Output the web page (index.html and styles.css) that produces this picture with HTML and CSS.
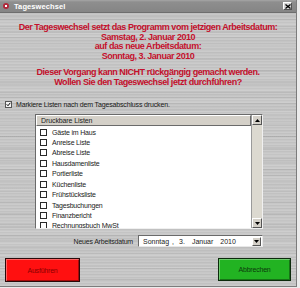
FILE: index.html
```html
<!DOCTYPE html>
<html lang="de">
<head>
<meta charset="utf-8">
<title>Tageswechsel</title>
<link rel="stylesheet" href="styles.css">
</head>
<body>
<div class="window">
  <div class="titlebar">
    <span class="app-icon"></span>
    <span class="title">Tageswechsel</span>
    <span class="close"><svg width="6" height="5" viewBox="0 0 6 5"><path d="M0.5 0.5 L5.5 4.5 M5.5 0.5 L0.5 4.5" stroke="#000" stroke-width="1.3"/></svg></span>
  </div>
  <div class="content">
    <div class="message">
      <p>Der Tageswechsel setzt das Programm vom jetzigen Arbeitsdatum:<br>Samstag, 2. Januar 2010<br>auf das neue Arbeitsdatum:<br>Sonntag, 3. Januar 2010</p>
      <p>Dieser Vorgang kann NICHT rückgängig gemacht werden.<br>Wollen Sie den Tageswechsel jetzt durchführen?</p>
    </div>
    <div class="print-check">
      <span class="cb cb-checked"><svg width="7" height="7" viewBox="0 0 7 7"><path d="M1 3.2 L2.8 5.2 L6 1.2" fill="none" stroke="#000" stroke-width="1.4"/></svg></span>
      <span class="print-label">Markiere Listen nach dem Tagesabschluss drucken.</span>
    </div>
    <div class="listbox">
      <div class="list-main">
        <div class="list-header">Druckbare Listen</div>
        <ul class="list-items">
          <li><span class="cb"></span>Gäste im Haus</li>
          <li><span class="cb"></span>Anreise Liste</li>
          <li><span class="cb"></span>Abreise Liste</li>
          <li><span class="cb"></span>Hausdamenliste</li>
          <li><span class="cb"></span>Portierliste</li>
          <li><span class="cb"></span>Küchenliste</li>
          <li><span class="cb"></span>Frühstücksliste</li>
          <li><span class="cb"></span>Tagesbuchungen</li>
          <li><span class="cb"></span>Finanzbericht</li>
          <li><span class="cb"></span>Rechnungsbuch MwSt</li>
        </ul>
      </div>
      <div class="scrollbar">
        <span class="sb-btn"><svg width="5" height="3" viewBox="0 0 5 3"><path d="M0 3 L2.5 0 L5 3 Z" fill="#000"/></svg></span>
        <span class="sb-track"></span>
        <span class="sb-btn"><svg width="5" height="3" viewBox="0 0 5 3"><path d="M0 0 L2.5 3 L5 0 Z" fill="#000"/></svg></span>
      </div>
    </div>
    <div class="date-row">
      <span class="date-label">Neues Arbeitsdatum</span>
      <div class="combo">
        <span class="seg seg-day">Sonntag</span>
        <span class="seg seg-comma">,</span>
        <span class="seg seg-num">3.</span>
        <span class="seg seg-month">Januar</span>
        <span class="seg seg-year">2010</span>
        <span class="combo-btn"><svg width="5" height="3" viewBox="0 0 5 3"><path d="M0 0 L2.5 3 L5 0 Z" fill="#000"/></svg></span>
      </div>
    </div>
    <div class="buttons">
      <button class="btn btn-run">Ausführen</button>
      <button class="btn btn-cancel">Abbrechen</button>
    </div>
  </div>
</div>
</body>
</html>
```
FILE: styles.css
```css
* { box-sizing: border-box; }
html, body { margin: 0; padding: 0; }
body {
  width: 300px;
  height: 288px;
  overflow: hidden;
  background: #ececec;
  font-family: "Liberation Sans", Arial, sans-serif;
}
.window {
  width: 297px;
  height: 287px;
  border-right: 1px solid #7c7c7c;
  border-bottom: 1px solid #7c7c7c;
  background-color: #c4c4c4;
  background-image:
    repeating-linear-gradient(180deg, rgba(255,255,255,0.08) 0 1px, rgba(0,0,0,0.03) 1px 2px, transparent 2px 3px),
    repeating-linear-gradient(180deg, rgba(255,255,255,0.06) 0 4px, rgba(0,0,0,0.05) 4px 5px, transparent 5px 11px),
    repeating-linear-gradient(180deg, transparent 0 6px, rgba(0,0,0,0.04) 6px 7px, rgba(255,255,255,0.05) 7px 13px);
  display: flex;
  flex-direction: column;
}
.titlebar {
  height: 13px;
  flex: none;
  display: flex;
  align-items: center;
  padding: 0 2px 0 3px;
  background: linear-gradient(180deg, #a6a6a6 0, #8e8e8e 2px, #858585 100%);
  border-bottom: 1px solid #6e6e6e;
}
.app-icon {
  width: 6px;
  height: 6px;
  border-radius: 50%;
  background: radial-gradient(circle, #fff 0 1px, #b0283a 1.5px);
  flex: none;
}
.title {
  margin-left: 5px;
  color: #fff;
  font-size: 7.5px;
  font-weight: bold;
  letter-spacing: 0.1px;
}
.close {
  margin-left: auto;
  margin-right: 2px;
  width: 9px;
  height: 8px;
  background: #d6d6d6;
  border: 1px solid;
  border-color: #fff #555 #555 #fff;
  display: flex;
  align-items: center;
  justify-content: center;
}
.content {
  padding: 0 5px;
  flex: 1;
}
.message {
  margin-top: 10px;
  text-align: center;
  color: #c4102c;
  font-weight: bold;
  font-size: 9px;
  letter-spacing: -0.45px;
  line-height: 9.5px;
}
.message p { margin: 0; }
.message p + p { margin-top: 7px; }
.print-check {
  margin-top: 12px;
  height: 10px;
  display: flex;
  align-items: center;
  font-size: 7px;
  letter-spacing: -0.15px;
  color: #1a1a1a;
}
.cb {
  width: 7px;
  height: 7px;
  flex: none;
  background: #fff;
  border: 1px solid #2a2a2a;
  display: inline-flex;
  align-items: center;
  justify-content: center;
}
.cb-checked {
  background: #f4f4f4;
  border-color: #555;
}
.cb-checked svg { display: block; }
.print-label { margin-left: 4px; }
.listbox {
  margin-top: 5px;
  margin-left: 30px;
  width: 228px;
  height: 115px;
  display: flex;
  border: 1px solid;
  border-color: #6a6a6a #f0f0f0 #f0f0f0 #6a6a6a;
  background: #fff;
  overflow: hidden;
}
.list-main {
  flex: 1;
  display: flex;
  flex-direction: column;
  overflow: hidden;
}
.list-header {
  height: 11px;
  flex: none;
  background: #d4d0c8;
  border: 1px solid;
  border-color: #fff #6a6a6a #6a6a6a #fff;
  font-size: 7px;
  line-height: 9px;
  padding-left: 4px;
  color: #222;
  letter-spacing: -0.1px;
}
.list-items {
  list-style: none;
  margin: 0;
  padding: 0.8px 0 0 4px;
}
.list-items li {
  height: 10.45px;
  display: flex;
  align-items: center;
  font-size: 7px;
  color: #222;
  letter-spacing: -0.2px;
  white-space: nowrap;
}
.list-items .cb { margin-right: 5px; }
.scrollbar {
  width: 11px;
  flex: none;
  display: flex;
  flex-direction: column;
  background: #e4e1da;
  border-left: 1px solid #9a9a9a;
}
.sb-btn {
  height: 10px;
  flex: none;
  background: #d4d0c8;
  border: 1px solid;
  border-color: #fff #555 #555 #fff;
  display: flex;
  align-items: center;
  justify-content: center;
}
.sb-btn svg { display: block; }
.sb-track { flex: 1; background: #dcd9d0; }
.date-row {
  margin-top: 6px;
  margin-left: 30px;
  width: 228px;
  display: flex;
  align-items: center;
  justify-content: flex-end;
}
.date-label {
  font-size: 7px;
  letter-spacing: -0.2px;
  color: #222;
  margin-right: 5px;
}
.combo {
  width: 125px;
  height: 12px;
  background: #fff;
  border: 1px solid;
  border-color: #6a6a6a #e8e8e8 #e8e8e8 #6a6a6a;
  display: flex;
  align-items: center;
  font-size: 7px;
  color: #222;
  padding-left: 4px;
}
.seg-comma { margin-left: 3px; }
.seg-num { margin-left: 5px; }
.seg-month { margin-left: 7px; }
.seg-year { margin-left: 7px; }
.combo-btn {
  margin-left: auto;
  margin-right: 1px;
  width: 9px;
  height: 9px;
  background: #d4d0c8;
  border: 1px solid;
  border-color: #fff #555 #555 #fff;
  display: flex;
  align-items: center;
  justify-content: center;
}
.combo-btn svg { display: block; }
.buttons {
  margin-top: 11px;
  display: flex;
  justify-content: space-between;
}
.btn {
  height: 24px;
  border: 1px solid #2a0a0a;
  box-shadow: inset 1px 1px 0 rgba(255,255,255,0.35), inset -1px -1px 0 rgba(0,0,0,0.35);
  font-family: "Liberation Sans", Arial, sans-serif;
  font-size: 7px;
  padding: 0;
  letter-spacing: -0.2px;
}
.btn-run {
  width: 75px;
  background: #ff1010;
  color: #8a0000;
}
.btn-cancel {
  width: 73px;
  height: 23px;
  background: #22b322;
  color: #0c3a0c;
  border-color: #0c2a0c;
}
```
